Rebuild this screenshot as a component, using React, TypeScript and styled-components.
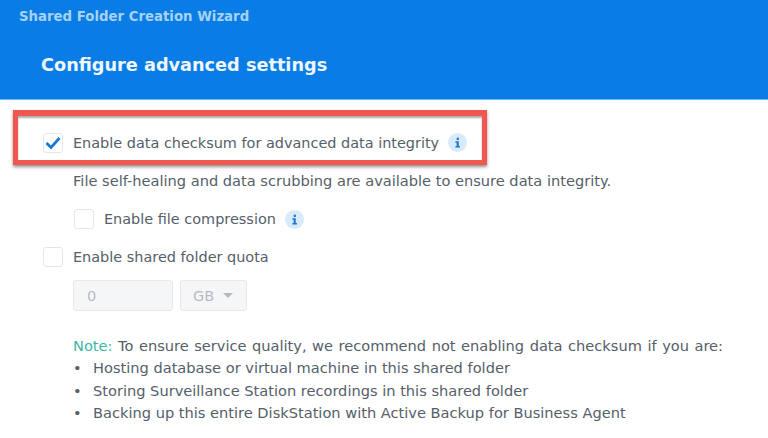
import React from "react";
import styled, { createGlobalStyle } from "styled-components";

const Global = createGlobalStyle`
  html, body { margin: 0; padding: 0; background: #fff; }
  body { width: 768px; height: 438px; overflow: hidden; font-family: "DejaVu Sans", Verdana, sans-serif; color: #555e69; }
`;

const Page = styled.div`
  width: 768px;
  height: 438px;
  display: flex;
  flex-direction: column;
  overflow: hidden;
`;

const Header = styled.header`
  height: 100px;
  box-sizing: border-box;
  background: #0a7ce6;
  border-bottom: 1px solid #6db7f2;
  padding: 9px 0 0 19px;
  display: flex;
  flex-direction: column;
`;

const WindowTitle = styled.div`
  font-size: 13.3px;
  line-height: 16px;
  font-weight: 700;
  color: #a5d2f7;
`;

const PageTitle = styled.h1`
  margin: 29px 0 0 22px;
  font-size: 17.7px;
  line-height: 22px;
  font-weight: 700;
  color: #eef6fe;
`;

const Body = styled.main`
  display: flex;
  flex-direction: column;
  align-items: flex-start;
  padding: 10px 0 0 13px;
`;

const Highlight = styled.div`
  box-sizing: border-box;
  width: 474px;
  height: 55px;
  border: 5px solid #f0584f;
  border-top-width: 6px;
  box-shadow: 0 2px 3px rgba(60, 50, 50, 0.55), inset 0 2px 2px rgba(60, 50, 50, 0.4);
  padding: 9px 0 0 25px;
  display: flex;
  align-items: center;
`;

const Row = styled.div<{ $indent?: number; $top?: number }>`
  display: flex;
  align-items: center;
  margin-left: ${(p) => p.$indent ?? 0}px;
  margin-top: ${(p) => p.$top ?? 0}px;
`;

const Box = styled.span<{ $checked?: boolean }>`
  box-sizing: border-box;
  width: 20px;
  height: 20px;
  flex: none;
  border: 1px solid ${(p) => (p.$checked ? "#dfe9f3" : "#e3e6ea")};
  border-radius: 3px;
  background: #fff;
  display: flex;
  align-items: center;
  justify-content: center;
  margin-right: 10px;
`;

const Label = styled.span`
  font-size: 14.45px;
  line-height: 20px;
  white-space: nowrap;
  color: #555e69;
`;

const InfoBadge = styled.span`
  width: 19px;
  height: 19px;
  flex: none;
  border-radius: 50%;
  background: #d8ebfb;
  margin-left: 9px;
  display: flex;
  align-items: center;
  justify-content: center;
`;

const Description = styled.p`
  margin: 6px 0 0 60px;
  font-size: 14.6px;
  line-height: 20px;
  white-space: nowrap;
  color: #555e69;
`;

const Controls = styled.div`
  display: flex;
  gap: 7px;
  margin: 13px 0 0 60px;
`;

const DisabledField = styled.div<{ $width: number; $inset: number }>`
  box-sizing: border-box;
  width: ${(p) => p.$width}px;
  height: 31px;
  background: #f5f6f8;
  border: 1px solid #e6e8eb;
  border-radius: 3px;
  font-size: 14.5px;
  color: #b6bbc2;
  display: flex;
  align-items: center;
  padding-left: ${(p) => p.$inset}px;
  gap: 9px;
`;

const Caret = styled.span`
  width: 0;
  height: 0;
  border-left: 5px solid transparent;
  border-right: 5px solid transparent;
  border-top: 5px solid #b6bbc2;
`;

const Notes = styled.div`
  margin: 24px 0 0 60px;
  font-size: 14.6px;
  line-height: 22.4px;
  color: #555e69;
  white-space: nowrap;
`;

const NoteLine = styled.div`
  word-spacing: 0.9px;
`;

const NoteKey = styled.span`
  color: #3fb5a3;
`;

const BulletList = styled.ul`
  list-style: none;
  margin: 0;
  padding: 0;
`;

const Bullet = styled.li`
  display: flex;
  &::before {
    content: "•";
    width: 20px;
    flex: none;
  }
`;

const Info = () => (
  <InfoBadge>
    <svg width="7" height="11" viewBox="0 0 8 12" aria-hidden="true">
      <rect x="3" y="0.5" width="2.6" height="2.6" fill="#1f77c9" />
      <path d="M1.6 4.6H5.4V10H6.8V11.6H1.6V10H3V6.2H1.6Z" fill="#1f77c9" />
    </svg>
  </InfoBadge>
);

export default function App() {
  return (
    <Page>
      <Global />
      <Header>
        <WindowTitle>Shared Folder Creation Wizard</WindowTitle>
        <PageTitle>Configure advanced settings</PageTitle>
      </Header>
      <Body>
        <Highlight>
          <Box $checked>
            <svg width="16" height="14" viewBox="0 0 16 14" aria-hidden="true">
              <path d="M1.5 7L6 11.5L14.5 2" fill="none" stroke="#1a76d4" strokeWidth="2.7" />
            </svg>
          </Box>
          <Label>Enable data checksum for advanced data integrity</Label>
          <Info />
        </Highlight>
        <Description>File self-healing and data scrubbing are available to ensure data integrity.</Description>
        <Row $indent={61} $top={18}>
          <Box />
          <Label>Enable file compression</Label>
          <Info />
        </Row>
        <Row $indent={30} $top={18}>
          <Box />
          <Label>Enable shared folder quota</Label>
        </Row>
        <Controls>
          <DisabledField $width={100} $inset={13}>0</DisabledField>
          <DisabledField $width={67} $inset={12}>
            GB
            <Caret />
          </DisabledField>
        </Controls>
        <Notes>
          <NoteLine>
            <NoteKey>Note:</NoteKey> To ensure service quality, we recommend not enabling data checksum if you are:
          </NoteLine>
          <BulletList>
            <Bullet>Hosting database or virtual machine in this shared folder</Bullet>
            <Bullet>Storing Surveillance Station recordings in this shared folder</Bullet>
            <Bullet>Backing up this entire DiskStation with Active Backup for Business Agent</Bullet>
          </BulletList>
        </Notes>
      </Body>
    </Page>
  );
}
